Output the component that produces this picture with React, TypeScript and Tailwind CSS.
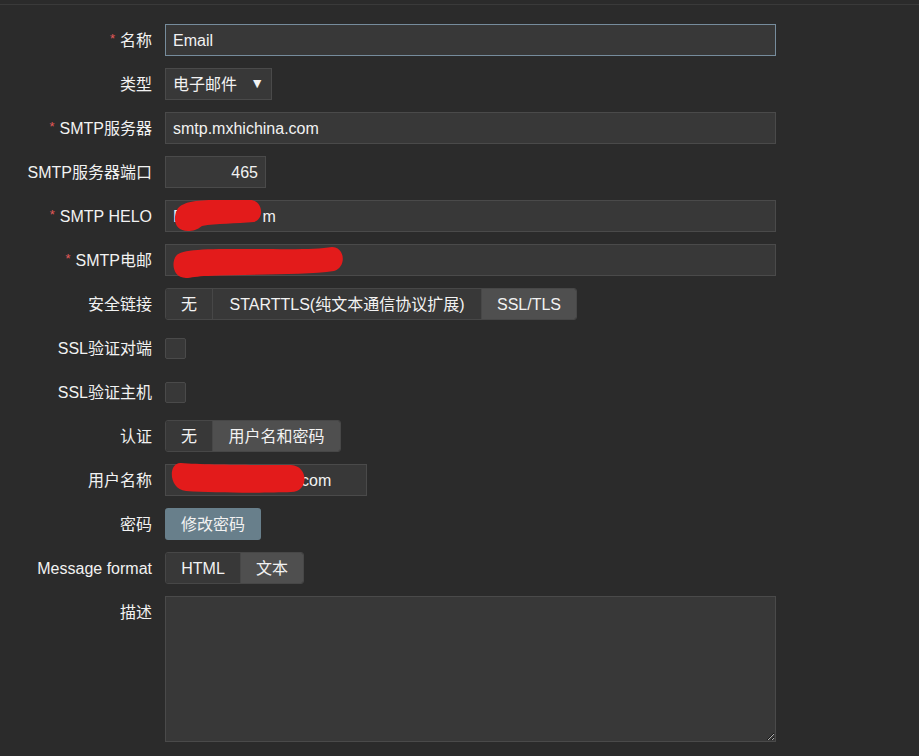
import React from "react";

const font = { fontFamily: '"Liberation Sans", Arial, "Noto Sans CJK SC", sans-serif' };

function Label({ text, req }: { text: string; req?: boolean }) {
  return (
    <div className="flex h-8 items-center justify-end whitespace-nowrap pt-[2px] text-[16px] text-[#f2f2f2]">
      {req && <span className="mr-[5px] text-[13px] leading-none text-[#e45959] relative top-[-3px]">*</span>}
      {text}
    </div>
  );
}

function Seg({ items, active }: { items: { t: string; w: string }[]; active: number }) {
  return (
    <div className="flex h-8 overflow-hidden rounded-[3px] border border-[#474747]">
      {items.map((it, i) => (
        <div
          key={i}
          className={
            "flex items-center justify-center pt-[2px] text-[16px] text-[#f2f2f2] " +
            it.w +
            (i === active ? " bg-[#4f4f4f]" : " bg-[#383838]") +
            (i > 0 ? " border-l border-[#474747]" : "")
          }
        >
          {it.t}
        </div>
      ))}
    </div>
  );
}

const inputCls =
  "h-8 border border-[#4a4a4a] bg-[#383838] px-[7px] pt-[2px] flex items-center text-[16px] text-[#f2f2f2]";

export default function App() {
  return (
    <div className="h-[756px] w-[919px] overflow-hidden bg-[#2b2b2b]" style={font}>
      <div className="mt-1 h-px bg-[#3a3a3a]" />
      <div className="grid grid-cols-[152px_611px] gap-x-[13px] gap-y-3 pt-[19px]">
        <Label text="名称" req />
        <div className="h-8 border border-[#768c9c] bg-[#383838] px-[7px] pt-[2px] flex items-center text-[16px] text-[#f2f2f2]">Email</div>

        <Label text="类型" />
        <div className="flex">
          <div className={inputCls + " w-[107px] justify-between pr-[7px]"}>
            <span>电子邮件</span>
            <span className="text-[14px] leading-none relative top-[-2px]">▼</span>
          </div>
        </div>

        <Label text="SMTP服务器" req />
        <div className={inputCls}>smtp.mxhichina.com</div>

        <Label text="SMTP服务器端口" />
        <div className="flex">
          <div className={inputCls + " w-[101px] justify-end"}>465</div>
        </div>

        <Label text="SMTP HELO" req />
        <div className={inputCls + " relative"}>
          <span>D</span>
          <span className="inline-block w-[78px]" />
          <span>m</span>
          <svg className="absolute left-0 top-0 overflow-visible" width="120" height="32">
            <path
              d="M22 30 C10 30 6 20 11 9 C15 1 30 -1 50 -1 L84 -1 C97 -1 99 18 88 21 C70 23 50 22 36 25 C31 29 27 30 22 30 Z"
              fill="#e31b1b"
            />
          </svg>
        </div>

        <Label text="SMTP电邮" req />
        <div className={inputCls + " relative"}>
          <span>&nbsp;</span>
          <svg className="absolute left-0 top-0 overflow-visible" width="200" height="32">
            <path
              d="M20 33 C7 33 5 18 10 11 C15 4 40 4 80 4 C120 4 150 5 166 2 C179 2 181 22 168 26 C140 30 90 29 42 31 C31 31 25 33 20 33 Z"
              fill="#e31b1b"
            />
          </svg>
        </div>

        <Label text="安全链接" />
        <div className="flex">
          <Seg
            active={2}
            items={[
              { t: "无", w: "w-[46px]" },
              { t: "STARTTLS(纯文本通信协议扩展)", w: "w-[269px]" },
              { t: "SSL/TLS", w: "w-[95px]" },
            ]}
          />
        </div>

        <Label text="SSL验证对端" />
        <div className="flex h-8 items-center">
          <div className="h-[21px] w-[21px] rounded-[2px] border border-[#4a4a4a] bg-[#383838]" />
        </div>

        <Label text="SSL验证主机" />
        <div className="flex h-8 items-center">
          <div className="h-[21px] w-[21px] rounded-[2px] border border-[#4a4a4a] bg-[#383838]" />
        </div>

        <Label text="认证" />
        <div className="flex">
          <Seg
            active={1}
            items={[
              { t: "无", w: "w-[46px]" },
              { t: "用户名和密码", w: "w-[128px]" },
            ]}
          />
        </div>

        <Label text="用户名称" />
        <div className="flex">
          <div className={inputCls + " w-[202px] relative"}>
            <span className="inline-block w-[128px]" />
            <span>com</span>
            <svg className="absolute left-0 top-0 overflow-visible" width="150" height="32">
              <path
                d="M15 -2 C40 0 100 0 125 0 C143 1 143 27 125 27 C100 28 50 28 20 26 C2 24 2 -3 15 -2 Z"
                fill="#e31b1b"
              />
            </svg>
          </div>
        </div>

        <Label text="密码" />
        <div className="flex">
          <div className="flex h-8 w-[96px] items-center justify-center rounded-[3px] bg-[#687f8b] pt-[2px] text-[16px] text-[#f2f2f2]">
            修改密码
          </div>
        </div>

        <Label text="Message format" />
        <div className="flex">
          <Seg
            active={1}
            items={[
              { t: "HTML", w: "w-[74px]" },
              { t: "文本", w: "w-[63px]" },
            ]}
          />
        </div>

        <Label text="描述" />
        <textarea
          className="h-[146px] w-[611px] resize-y border border-[#4a4a4a] bg-[#383838] text-[16px] text-[#f2f2f2] outline-none [color-scheme:dark]"
        />
      </div>
    </div>
  );
}
